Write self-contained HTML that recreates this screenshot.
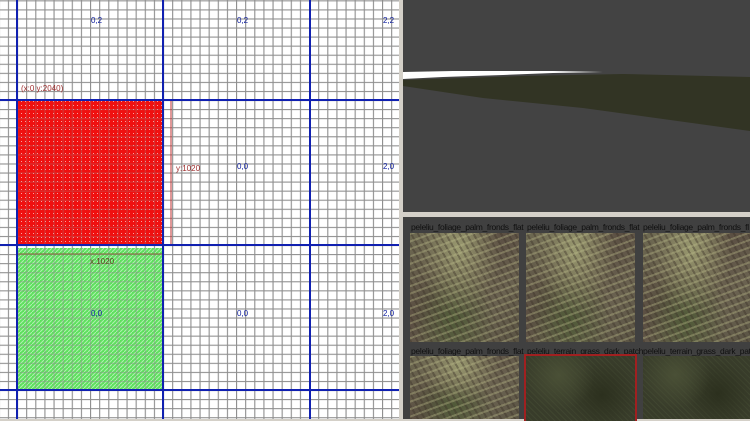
<!DOCTYPE html>
<html><head><style>
*{margin:0;padding:0}
body{width:750px;height:419px;overflow:hidden;background:#d4d0c8;position:relative;font-family:"Liberation Sans",sans-serif}
.lbl{position:absolute;font-size:8.5px;color:#101010;white-space:nowrap;overflow:hidden;width:116px;letter-spacing:-0.3px}
.pf{position:absolute;background:
repeating-linear-gradient(160deg,rgba(190,190,140,.35) 0 2px,transparent 2px 7px),
repeating-linear-gradient(60deg,rgba(60,50,40,.4) 0 2px,transparent 2px 6px),
radial-gradient(ellipse at 45% 15%,#9a9a70,transparent 50%),
radial-gradient(ellipse at 40% 80%,#505a38,transparent 45%),
linear-gradient(135deg,#6e6a52,#5a4e42 40%,#6a6250 70%,#5a5444)}
.gr{position:absolute;background:
radial-gradient(circle at 30% 30%,#4a5036,transparent 40%),
radial-gradient(circle at 70% 60%,#2c301e,transparent 40%),
repeating-linear-gradient(45deg,rgba(80,90,60,.3) 0 1px,transparent 1px 4px),#383c2a}
</style></head><body>
<svg width="399" height="419" style="position:absolute;left:0;top:0" xmlns="http://www.w3.org/2000/svg">
<defs>
<pattern id="g" x="17" y="100" width="9.125" height="9.0625" patternUnits="userSpaceOnUse">
<path d="M0 0.5H9.125M0.5 0V9.125" stroke="#8e8e8e" stroke-width="1.2" fill="none"/>
</pattern>
<pattern id="rd" width="4" height="4" patternUnits="userSpaceOnUse">
<rect width="4" height="4" fill="#f01010"/><rect x="1" y="1" width="1" height="1" fill="#f8a0a0"/>
</pattern>
<pattern id="gd" width="4" height="4" patternUnits="userSpaceOnUse">
<rect width="4" height="4" fill="#5ee05e"/><path d="M0 4L4 0" stroke="#b0f0b0" stroke-width="1"/>
</pattern>
</defs>
<rect width="399" height="419" fill="#fff"/>
<rect width="399" height="419" fill="url(#g)"/>
<rect x="17" y="100" width="146" height="145" fill="url(#rd)"/>
<rect x="17" y="100" width="146" height="145" fill="url(#g)" opacity=".3"/>
<rect x="17" y="248" width="146" height="142" fill="url(#gd)"/>
<rect x="17" y="248" width="146" height="142" fill="url(#g)" opacity=".5"/>
<path d="M171 100V245M163 245H171" stroke="#c03030" stroke-width="1"/>
<path d="M17 254H163" stroke="#806030" stroke-width="1"/>
<g stroke="#1020b0" stroke-width="2" fill="none">
<path d="M17 0V419M163 0V419M310 0V419M0 100H399M0 245H399M0 390H399"/>
</g>
<g font-size="8" fill="#1020a0" font-family="Liberation Sans">
<text x="91" y="23">0,2</text><text x="237" y="23">0,2</text><text x="383" y="23">2,2</text>
<text x="237" y="169">0,0</text><text x="383" y="169">2,0</text>
<text x="91" y="316">0,0</text><text x="237" y="316">0,0</text><text x="383" y="316">2,0</text>
</g>
<text x="21" y="91" font-size="8" fill="#a03030">(x:0  y:2040)</text>
<text x="176" y="171" font-size="8" fill="#a03030">y:1020</text>
<text x="90" y="264" font-size="8" fill="#604020">x:1020</text>
</svg>
<svg width="347" height="212" style="position:absolute;top:0;left:403px" xmlns="http://www.w3.org/2000/svg">
<rect width="347" height="212" fill="#434343"/>
<polygon points="0,80 0,86 80,98 180,108 347,131 347,77 220,74 120,76 0,80" fill="#323424"/>
<polygon points="0,72 50,71 100,71 150,71 200,72 150,73 100,75 40,77 0,79" fill="#fff"/>
</svg>
<div style="position:absolute;left:403px;top:217px;width:347px;height:202px;background:#404040"></div>
<div class="lbl" style="left:411px;top:222px">peleliu_foliage_palm_fronds_flat</div>
<div class="lbl" style="left:527px;top:222px">peleliu_foliage_palm_fronds_flat</div>
<div class="lbl" style="left:643px;top:222px">peleliu_foliage_palm_fronds_fl</div>
<div class="lbl" style="left:411px;top:346px">peleliu_foliage_palm_fronds_flat</div>
<div class="lbl" style="left:527px;top:346px">peleliu_terrain_grass_dark_patch</div>
<div class="lbl" style="left:643px;top:346px">peleliu_terrain_grass_dark_pat</div>
<div class="pf" style="left:410px;top:233px;width:109px;height:109px"></div>
<div class="pf" style="left:526px;top:233px;width:109px;height:109px"></div>
<div class="pf" style="left:643px;top:233px;width:107px;height:109px"></div>
<div class="pf" style="left:410px;top:356px;width:109px;height:63px"></div>
<div class="gr" style="left:524px;top:354px;width:109px;height:65px;border:2px solid #a02020;border-bottom:none"></div>
<div class="gr" style="left:643px;top:356px;width:107px;height:63px"></div>
</body></html>
